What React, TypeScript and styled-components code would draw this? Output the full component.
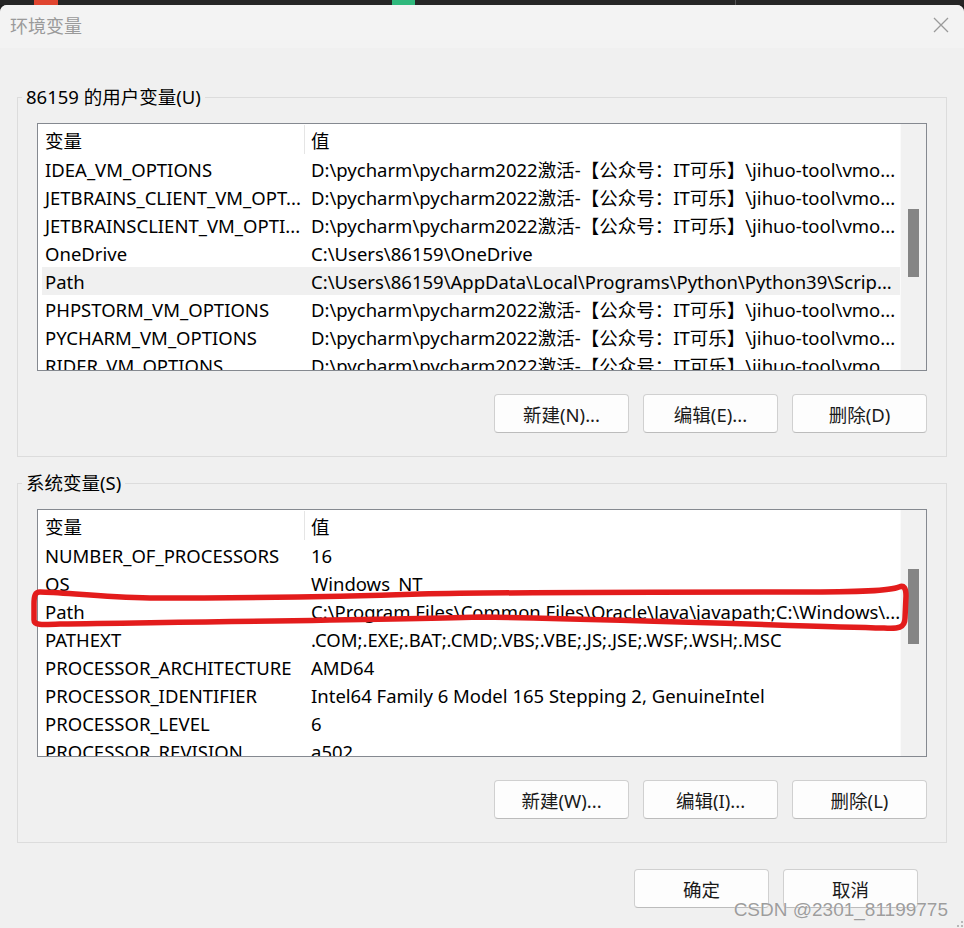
import styled, { createGlobalStyle } from 'styled-components'

const GlobalStyle = createGlobalStyle`
  html, body {
    margin: 0;
    padding: 0;
    background: #1f1f1f;
  }
  body {
    font-family: "Noto Sans", "Noto Sans CJK SC", sans-serif;
  }
  * {
    box-sizing: border-box;
  }
`

interface Variable {
  name: string
  value: string
}

const pycharmValue = 'D:\\pycharm\\pycharm2022激活-【公众号：IT可乐】\\jihuo-tool\\vmo...'

const userVariables: Variable[] = [
  { name: 'IDEA_VM_OPTIONS', value: pycharmValue },
  { name: 'JETBRAINS_CLIENT_VM_OPT...', value: pycharmValue },
  { name: 'JETBRAINSCLIENT_VM_OPTI...', value: pycharmValue },
  { name: 'OneDrive', value: 'C:\\Users\\86159\\OneDrive' },
  { name: 'Path', value: 'C:\\Users\\86159\\AppData\\Local\\Programs\\Python\\Python39\\Scrip...' },
  { name: 'PHPSTORM_VM_OPTIONS', value: pycharmValue },
  { name: 'PYCHARM_VM_OPTIONS', value: pycharmValue },
  { name: 'RIDER_VM_OPTIONS', value: pycharmValue }
]

const systemVariables: Variable[] = [
  { name: 'NUMBER_OF_PROCESSORS', value: '16' },
  { name: 'OS', value: 'Windows_NT' },
  { name: 'Path', value: 'C:\\Program Files\\Common Files\\Oracle\\Java\\javapath;C:\\Windows\\...' },
  { name: 'PATHEXT', value: '.COM;.EXE;.BAT;.CMD;.VBS;.VBE;.JS;.JSE;.WSF;.WSH;.MSC' },
  { name: 'PROCESSOR_ARCHITECTURE', value: 'AMD64' },
  { name: 'PROCESSOR_IDENTIFIER', value: 'Intel64 Family 6 Model 165 Stepping 2, GenuineIntel' },
  { name: 'PROCESSOR_LEVEL', value: '6' },
  { name: 'PROCESSOR_REVISION', value: 'a502' }
]

interface VariableListProps {
  items: Variable[]
  selected?: number
  thumbTop: number
  thumbHeight: number
}

const VariableList = ({ items, selected, thumbTop, thumbHeight }: VariableListProps) => (
  <ListView>
    <ListBody>
      <HeaderRow>
        <NameCell>变量</NameCell>
        <HeaderValueCell>值</HeaderValueCell>
      </HeaderRow>
      {items.map((item, i) => (
        <Row key={item.name + i} $selected={i === selected}>
          <NameCell>{item.name}</NameCell>
          <ValueCell>{item.value}</ValueCell>
        </Row>
      ))}
    </ListBody>
    <ScrollTrack>
      <ScrollThumb $top={thumbTop} $height={thumbHeight} />
    </ScrollTrack>
  </ListView>
)

const App = () => {
  return (
    <Page>
      <GlobalStyle />
      <TaskStrip>
        <StripIcon $color="#e0452f" $width={24} />
        <StripGap $width={334} />
        <StripIcon $color="#2fb87c" $width={23} />
        <StripGap $width={320} />
        <StripDivider />
      </TaskStrip>
      <Window>
        <TitleBar>
          <Title>环境变量</Title>
          <CloseIcon viewBox="0 0 16 16">
            <path d="M1 1 L15 15 M15 1 L1 15" stroke="#9a9a9a" strokeWidth="1.3" fill="none" />
          </CloseIcon>
        </TitleBar>
        <Content>
          <GroupBox>
            <Legend>86159 的用户变量(U)</Legend>
            <VariableList items={userVariables} selected={4} thumbTop={85} thumbHeight={68} />
            <ButtonRow>
              <DialogButton>新建(N)...</DialogButton>
              <DialogButton>编辑(E)...</DialogButton>
              <DialogButton>删除(D)</DialogButton>
            </ButtonRow>
          </GroupBox>
          <GroupBox>
            <Legend>系统变量(S)</Legend>
            <VariableList items={systemVariables} thumbTop={59} thumbHeight={75} />
            <ButtonRow>
              <DialogButton>新建(W)...</DialogButton>
              <DialogButton>编辑(I)...</DialogButton>
              <DialogButton>删除(L)</DialogButton>
            </ButtonRow>
          </GroupBox>
          <Footer>
            <DialogButton>确定</DialogButton>
            <DialogButton>取消</DialogButton>
          </Footer>
        </Content>
      </Window>

      <Annotation viewBox="0 0 964 928">
        <path
          d="M40 592 C 35 592, 34 596, 34 604 L 34 620 C 34 625, 40 625, 60 624 C 200 622, 380 620, 480 617 C 640 620, 800 626, 884 628 C 898 629, 905 628, 905 618 L 906 596 C 906 588, 904 585, 899 587 C 890 591, 860 592, 800 592 C 650 592, 520 592, 420 594 C 330 597, 250 598, 150 598 C 100 597, 60 592, 40 592"
          stroke="#e31c1c"
          strokeWidth="5.5"
          fill="none"
          strokeLinecap="round"
          strokeLinejoin="round"
        />
      </Annotation>

      <Watermark>CSDN @2301_81199775</Watermark>
      <Grip viewBox="0 0 8 8">
        <rect x="5" y="1" width="2" height="2" fill="#b8b8b8" />
        <rect x="5" y="5" width="2" height="2" fill="#b8b8b8" />
        <rect x="1" y="5" width="2" height="2" fill="#b8b8b8" />
      </Grip>
    </Page>
  )
}

export default App

const Page = styled.div`
  position: relative;
  width: 964px;
  height: 928px;
  overflow: hidden;
  background: #1f1f1f;
`

const TaskStrip = styled.div`
  display: flex;
  align-items: stretch;
  height: 5px;
  padding-left: 34px;
  background: #262626;
`

const StripIcon = styled.div<{ $color: string; $width: number }>`
  width: ${({ $width }) => $width}px;
  background: ${({ $color }) => $color};
`

const StripGap = styled.div<{ $width: number }>`
  width: ${({ $width }) => $width}px;
`

const StripDivider = styled.div`
  width: 1px;
  background: #555;
`

const Window = styled.div`
  display: flex;
  flex-direction: column;
  height: 923px;
  background: #f0f0f0;
  border-radius: 7px 7px 0 0;
  overflow: hidden;
`

const TitleBar = styled.div`
  display: flex;
  align-items: center;
  justify-content: space-between;
  height: 43px;
  padding: 0 15px 3px 10px;
  background: #f3f3f3;
`

const Title = styled.div`
  font-family: "Noto Sans CJK SC", sans-serif;
  font-size: 18px;
  color: #9a9a9a;
`

const CloseIcon = styled.svg`
  width: 16px;
  height: 16px;
`

const Content = styled.div`
  display: flex;
  flex-direction: column;
  padding: 37px 17px 0 17px;
`

const GroupBox = styled.fieldset`
  margin: 0;
  min-width: 0;
  padding: 14px 19px 23px 19px;
  border: 1px solid #dcdcdc;

  & + & {
    margin-top: 14px;
  }
`

const Legend = styled.legend`
  margin-left: -15px;
  padding: 0 4px;
  font-size: 18.5px;
  line-height: 24px;
  color: #000;
`

const ListView = styled.div`
  display: flex;
  height: 248px;
  border: 1px solid #858990;
  background: #fff;
  overflow: hidden;
`

const ListBody = styled.div`
  display: flex;
  flex-direction: column;
  flex: 1;
  min-width: 0;
  padding-left: 4px;
  overflow: hidden;
`

const HeaderRow = styled.div`
  display: flex;
  align-items: center;
  flex-shrink: 0;
  height: 31px;
  font-size: 18.5px;
  color: #000;
`

const Row = styled.div<{ $selected?: boolean }>`
  display: flex;
  align-items: center;
  flex-shrink: 0;
  height: 28px;
  font-size: 18.5px;
  color: #000;
  background: ${({ $selected }) => ($selected ? '#f0f0f0' : 'transparent')};
`

const NameCell = styled.div`
  flex-shrink: 0;
  width: 262px;
  padding-left: 3px;
  white-space: nowrap;
  overflow: hidden;
`

const ValueCell = styled.div`
  flex: 1;
  min-width: 0;
  padding-left: 7px;
  white-space: nowrap;
  overflow: hidden;
`

const HeaderValueCell = styled(ValueCell)`
  align-self: stretch;
  display: flex;
  align-items: center;
  margin-top: 1px;
  margin-bottom: 1px;
  padding-left: 6px;
  border-left: 1px solid #e5e5e5;
`

const ScrollTrack = styled.div`
  display: flex;
  flex-direction: column;
  width: 26px;
  flex-shrink: 0;
  background: #f1f1f1;
  border-left: 1px solid #fafafa;
`

const ScrollThumb = styled.div<{ $top: number; $height: number }>`
  margin-top: ${({ $top }) => $top}px;
  margin-left: 7px;
  width: 11px;
  height: ${({ $height }) => $height}px;
  background: #858585;
`

const ButtonRow = styled.div`
  display: flex;
  justify-content: flex-end;
  gap: 14px;
  margin-top: 23px;
`

const DialogButton = styled.button`
  display: flex;
  align-items: center;
  justify-content: center;
  width: 135px;
  height: 39px;
  padding: 0;
  border: 1px solid #d0d0d0;
  border-bottom-color: #bcbcbc;
  border-radius: 4px;
  background: #fdfdfd;
  font-family: "Noto Sans", "Noto Sans CJK SC", sans-serif;
  font-size: 18.5px;
  color: #1a1a1a;
`

const Footer = styled.div`
  display: flex;
  justify-content: flex-end;
  gap: 14px;
  margin-top: 26px;
  padding-right: 29px;
`

const Annotation = styled.svg`
  position: absolute;
  top: 0;
  left: 0;
  width: 964px;
  height: 928px;
  pointer-events: none;
`

const Watermark = styled.div`
  position: absolute;
  right: 16px;
  bottom: 6px;
  font-family: "Liberation Sans", Arial, sans-serif;
  font-size: 19px;
  line-height: 24px;
  color: #9d9d9d;
  text-shadow: 0 0 1px #ffffff;
  pointer-events: none;
`

const Grip = styled.svg`
  position: absolute;
  right: 0;
  bottom: 0;
  width: 8px;
  height: 8px;
`
